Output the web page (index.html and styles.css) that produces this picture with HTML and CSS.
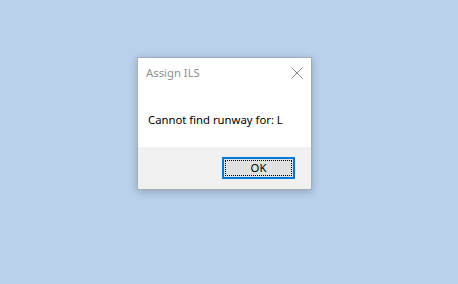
FILE: index.html
```html
<!DOCTYPE html>
<html>
<head>
<meta charset="utf-8">
<link rel="stylesheet" href="styles.css">
</head>
<body>
<div class="desktop">
  <div class="dialog">
    <div class="titlebar">
      <span class="title">Assign ILS</span>
      <svg class="close" width="12" height="12" viewBox="0 0 12 12">
        <path d="M0.5 0.5 L11.5 11.5 M11.5 0.5 L0.5 11.5" stroke="#8a8a8a" stroke-width="1" fill="none"/>
      </svg>
    </div>
    <div class="content">
      <p class="message">Cannot find runway for: L</p>
    </div>
    <div class="footer">
      <button class="btn"><span class="btn-focus">OK</span></button>
    </div>
  </div>
</div>
</body>
</html>
```
FILE: styles.css
```css
html, body {
  margin: 0;
  padding: 0;
}
body {
  background: #b9d1ea;
  width: 458px;
  height: 284px;
  overflow: hidden;
  font-family: "Noto Sans", "Open Sans", sans-serif;
}
.desktop {
  position: relative;
  width: 458px;
  height: 284px;
}
.dialog {
  position: absolute;
  left: 137px;
  top: 57px;
  width: 173px;
  height: 131px;
  border: 1px solid #a6acb3;
  background: #ffffff;
  box-shadow: 0 2px 8px rgba(0, 0, 0, 0.22);
  display: flex;
  flex-direction: column;
}
.titlebar {
  height: 30px;
  display: flex;
  align-items: center;
  justify-content: space-between;
  padding: 0 8px 0 8px;
}
.title {
  font-size: 11.3px;
  color: #8f8f8f;
  line-height: 30px;
}
.close {
  display: block;
}
.content {
  height: 59px;
  box-sizing: border-box;
  padding: 24px 0 0 10px;
}
.message {
  margin: 0;
  font-size: 11.3px;
  line-height: 16px;
  color: #000;
}
.footer {
  flex: 1;
  background: #f0f0f0;
  display: flex;
  justify-content: flex-end;
  align-items: flex-start;
  padding: 10px 16px 0 0;
}
.btn {
  width: 73px;
  height: 22px;
  box-sizing: border-box;
  border: 2px solid #0078d7;
  background: #e1e1e1;
  padding: 1px;
  margin: 0;
  font-family: inherit;
  font-size: 11.3px;
  color: #000;
  display: flex;
}
.btn-focus {
  flex: 1;
  border: 1px dotted #000;
  display: flex;
  align-items: center;
  justify-content: center;
  line-height: 14px;
}
```
